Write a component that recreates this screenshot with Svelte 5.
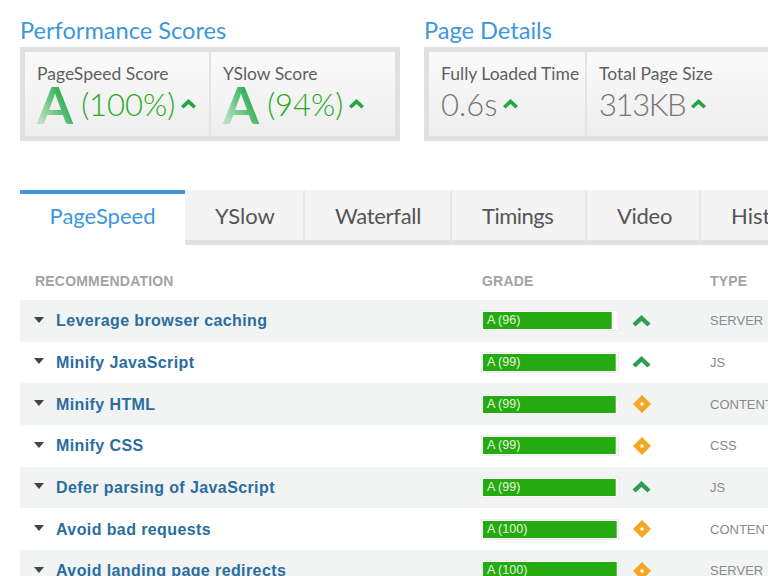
<script>
	const scoreCards = [
		{ label: 'PageSpeed Score', value: '(100%)' },
		{ label: 'YSlow Score', value: '(94%)' }
	];
	const detailCards = [
		{ label: 'Fully Loaded Time', value: '0.6s' },
		{ label: 'Total Page Size', value: '313KB' }
	];
	const tabs = ['PageSpeed', 'YSlow', 'Waterfall', 'Timings', 'Video', 'History'];
	const rows = [
		{ name: 'Leverage browser caching', score: 96, icon: 'up', type: 'SERVER' },
		{ name: 'Minify JavaScript', score: 99, icon: 'up', type: 'JS' },
		{ name: 'Minify HTML', score: 99, icon: 'same', type: 'CONTENT' },
		{ name: 'Minify CSS', score: 99, icon: 'same', type: 'CSS' },
		{ name: 'Defer parsing of JavaScript', score: 99, icon: 'up', type: 'JS' },
		{ name: 'Avoid bad requests', score: 100, icon: 'same', type: 'CONTENT' },
		{ name: 'Avoid landing page redirects', score: 100, icon: 'same', type: 'SERVER' }
	];
</script>

{#snippet chevron(cls)}
	<svg class={cls} viewBox="0 0 18 12"><path d="M0 8.5 9 0l9 8.5-3 3-6-5.5-6 5.5z" /></svg>
{/snippet}

<div class="page">
	<div class="summary">
		<section class="scores">
			<h2>Performance Scores</h2>
			<div class="panel">
				{#each scoreCards as card}
					<div class="card">
						<div class="label">{card.label}</div>
						<div class="value green"><span class="big-a">A</span><span class="pct">{card.value}</span>{@render chevron('up')}</div>
					</div>
				{/each}
			</div>
		</section>
		<section class="details">
			<h2>Page Details</h2>
			<div class="panel">
				{#each detailCards as card}
					<div class="card">
						<div class="label">{card.label}</div>
						<div class="value">{card.value}{@render chevron('up')}</div>
					</div>
				{/each}
			</div>
		</section>
	</div>

	<nav class="tabs">
		{#each tabs as tab, i}
			<div class="tab" class:active={i === 0}>{tab}</div>
		{/each}
	</nav>

	<div class="table">
		<div class="row head">
			<div class="c-name">RECOMMENDATION</div>
			<div class="c-grade">GRADE</div>
			<div class="c-type">TYPE</div>
		</div>
		{#each rows as row, i}
			<div class="row item" class:odd={i % 2 === 0}>
				<div class="c-name"><span class="caret"></span><span class="link">{row.name}</span></div>
				<div class="c-grade">
					<div class="bar"><div class="fill" style="width: {row.score}%">A ({row.score})</div></div>
					{#if row.icon === 'up'}
						{@render chevron('trend')}
					{:else}
						<svg class="same" viewBox="0 0 18 18"><path d="M9 0l9 9-9 9-9-9z" /><circle cx="9" cy="9" r="1.7" /></svg>
					{/if}
				</div>
				<div class="c-type">{row.type}</div>
			</div>
		{/each}
	</div>
</div>

<style>
	:global(body) {
		margin: 0;
		background: #fff;
		overflow: hidden;
	}

	.page {
		height: 576px;
		overflow: hidden;
		padding: 14px 0 0 20px;
		box-sizing: border-box;
		font-family: "Lato", "Liberation Sans", sans-serif;
	}

	.summary {
		display: flex;
		gap: 24px;
		height: 176px;
	}

	.scores { width: 380px; flex: none; }
	.details { width: 380px; flex: none; }

	h2 {
		margin: 0;
		font-size: 23.6px;
		line-height: 33px;
		font-weight: 400;
		color: #3d97dc;
	}

	.panel {
		display: flex;
		box-sizing: border-box;
		height: 94px;
		border: 5px solid #e0e0e0;
		background: linear-gradient(#fafafa, #eeeeee);
	}

	.card {
		flex: 1;
		box-sizing: border-box;
		padding: 12px 0 0 12px;
		white-space: nowrap;
		overflow: hidden;
	}

	.details .card:first-child { flex: 0 0 156px; }

	.card + .card { border-left: 2px solid #e4e4e4; }

	.label {
		font-size: 17.5px;
		line-height: 20px;
		color: #5f5f5f;
	}

	.value {
		display: flex;
		align-items: center;
		height: 40px;
		font-size: 31px;
		font-weight: 300;
		color: #757575;
	}

	.value.green { color: #29a81c; }

	.details .card:last-child .value { letter-spacing: -1.4px; }

	.big-a {
		font-size: 52px;
		line-height: 40px;
		font-weight: 700;
		letter-spacing: 0;
		background: linear-gradient(60deg, #b5e0bd 10%, #6cc583 45%, #1fa84a 80%);
		-webkit-background-clip: text;
		background-clip: text;
		color: transparent;
		margin-right: 8px;
	}

	.up {
		width: 15px;
		height: 10px;
		margin-left: 6px;
		fill: #22a83e;
	}

	.tabs {
		display: flex;
		height: 55px;
		box-sizing: border-box;
		white-space: nowrap;
	}

	.tab {
		flex: none;
		box-sizing: border-box;
		background: #f4f4f4;
		border-top: 1px solid #f4f4f4;
		border-bottom: 5px solid #e0e0e0;
		border-right: 2px solid #e6e6e6;
		padding: 10px 30px 0;
		font-size: 22px;
		line-height: 30px;
		color: #555;
	}

	.tab:nth-child(2) { width: 120px; }
	.tab:nth-child(3) { width: 147px; letter-spacing: -0.3px; }
	.tab:nth-child(4) { width: 135px; letter-spacing: -0.5px; }
	.tab:nth-child(5) { width: 114px; letter-spacing: -0.3px; }

	.tab.active {
		width: 165px;
		background: #fff;
		border-top: 4px solid #3d97dc;
		border-bottom: none;
		border-right: none;
		padding: 7px 0 0;
		color: #3d97dc;
		text-align: center;
	}

	.table {
		font-family: "Liberation Sans", sans-serif;
		width: 748px;
	}

	.row {
		display: grid;
		grid-template-columns: 448px 228px 72px;
		white-space: nowrap;
		overflow: hidden;
	}

	.row > div { padding-left: 15px; }
	.row > .c-grade { padding-left: 14px; }
	.row > .c-type { padding-left: 14px; }

	.head {
		height: 55px;
		align-items: center;
		padding-top: 17px;
		box-sizing: border-box;
		font-size: 14px;
		font-weight: 700;
		letter-spacing: 0.2px;
		color: #a3a3a3;
	}

	.item {
		height: 41.67px;
		align-items: center;
		background: #fff;
		font-size: 13px;
		color: #8a8a8a;
	}

	.item.odd { background: #f2f4f4; }

	.c-name, .c-grade {
		display: flex;
		align-items: center;
	}

	.row.item > .c-name { padding-left: 14px; }
	.row.item > .c-grade { padding-left: 13px; }

	.caret {
		width: 0;
		height: 0;
		border-left: 5px solid transparent;
		border-right: 5px solid transparent;
		border-top: 6px solid #444;
		margin-right: 12px;
		margin-top: -2px;
	}

	.link {
		font-size: 16px;
		font-weight: 700;
		letter-spacing: 0.4px;
		padding-top: 1px;
		color: #2a6d9f;
	}

	.bar {
		width: 134px;
		height: 17px;
		padding: 1px;
		margin-right: 13px;
		background: #fff;
		border: 1px solid #ececec;
		flex: none;
	}

	.fill {
		height: 17px;
		box-sizing: border-box;
		max-width: 100%;
		background: #25aa12;
		color: #e4f5df;
		font-size: 12.5px;
		line-height: 17px;
		padding-left: 4px;
		border-right: 1px solid #60c450;
	}

	.trend {
		width: 19px;
		height: 12px;
		fill: #2e9e50;
	}

	.same {
		width: 18px;
		height: 18px;
		margin-left: 1px;
	}

	.same path { fill: #f5a623; }
	.same circle { fill: #fff; }
</style>
